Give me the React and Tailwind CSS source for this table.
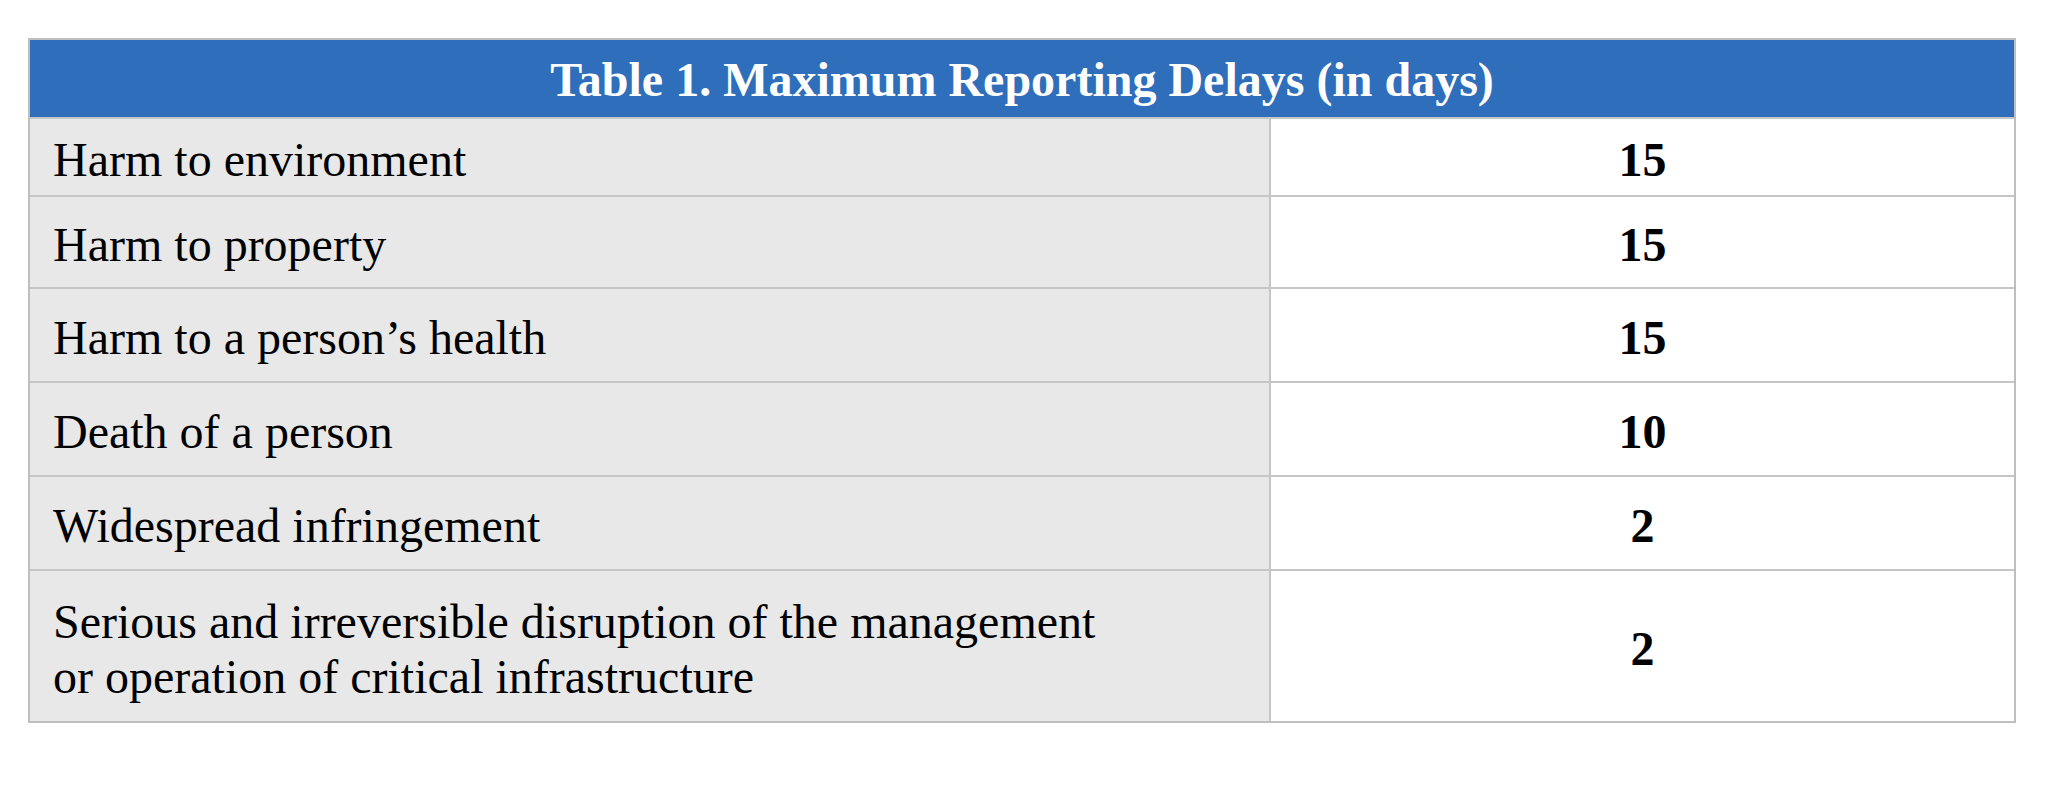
// Table 1. Maximum Reporting Delays (in days)

const rows = [
  { label: "Harm to environment", days: "15", h: "h-[78px]" },
  { label: "Harm to property", days: "15", h: "h-[92px]" },
  { label: "Harm to a person\u2019s health", days: "15", h: "h-[94px]" },
  { label: "Death of a person", days: "10", h: "h-[94px]" },
  { label: "Widespread infringement", days: "2", h: "h-[94px]" },
  {
    label: [
      "Serious and irreversible disruption of the management",
      "or operation of critical infrastructure",
    ],
    days: "2",
    h: "h-[150px]",
    last: true,
  },
];

export default function App() {
  return (
    <div
      className="w-[2048px] h-[787px] bg-white pt-[38px] pl-[28px] text-black"
      style={{ fontFamily: '"Liberation Serif", "Times New Roman", serif' }}
    >
      <div className="w-[1988px] border-2 border-[#bfbfbf]">
        <div className="h-[79px] bg-[#2f6ebb] border-b-2 border-[#c6c6c6] flex items-center justify-center pt-[2px]">
          <span className="text-[48px] font-bold text-white leading-none">
            Table 1. Maximum Reporting Delays (in days)
          </span>
        </div>
        {rows.map((r, i) => (
          <div
            key={i}
            className={`${r.h} flex ${r.last ? "" : "border-b-2 border-[#c6c6c6]"}`}
          >
            <div className="w-[1241px] bg-[#e8e8e8] border-r-2 border-[#c6c6c6] flex items-center pl-[23px] pt-[5px]">
              {Array.isArray(r.label) ? (
                <div className="text-[48px] leading-[55px]">
                  {r.label.map((l) => (
                    <div key={l}>{l}</div>
                  ))}
                </div>
              ) : (
                <span className="text-[48px] leading-none">{r.label}</span>
              )}
            </div>
            <div className="flex-1 bg-white flex items-center justify-center pt-[5px]">
              <span className="text-[48px] font-bold leading-none">{r.days}</span>
            </div>
          </div>
        ))}
      </div>
    </div>
  );
}
